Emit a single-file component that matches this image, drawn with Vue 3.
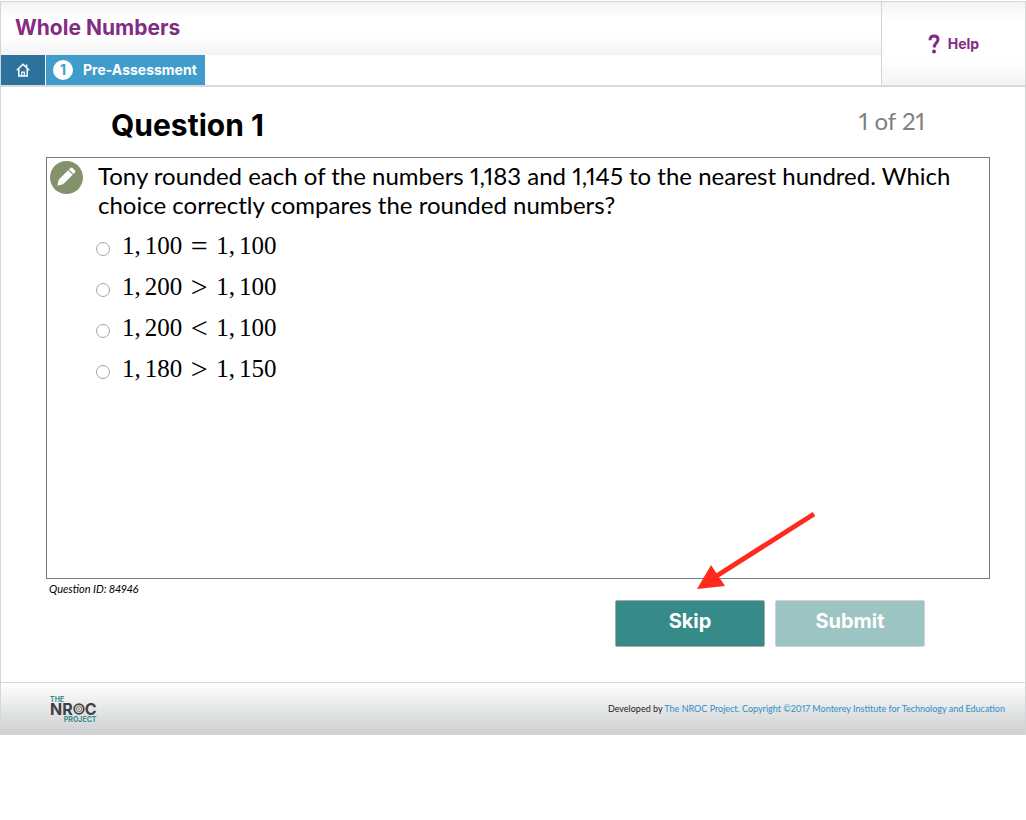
<script setup>
import { ref } from 'vue'

const selected = ref(null)
const choices = [
  { left: ['1', '100'], op: '=', right: ['1', '100'] },
  { left: ['1', '200'], op: '>', right: ['1', '100'] },
  { left: ['1', '200'], op: '<', right: ['1', '100'] },
  { left: ['1', '180'], op: '>', right: ['1', '150'] },
]
</script>

<template>
  <div class="page">
    <header class="header">
      <div class="header-main">
        <div class="title-bar">
          <h1 class="title">Whole Numbers</h1>
        </div>
        <nav class="crumbs">
          <a class="crumb home" href="#" aria-label="Home">
            <svg width="14" height="14" viewBox="0 0 14 14" fill="none" stroke="#fff" stroke-width="1.5">
              <path d="M0.8 7.3 7 1.2l6.2 6.1" />
              <path d="M2.8 6v7h8.4V6" />
              <path d="M5.7 13V9.2h2.6V13" stroke-width="1.2" />
              <path d="M10.6 1.5v3" />
            </svg>
          </a>
          <a class="crumb step" href="#">
            <span class="step-number">1</span>
            <span>Pre-Assessment</span>
          </a>
        </nav>
      </div>
      <a class="help" href="#">
        <svg width="12" height="20" viewBox="0 0 12 20" fill="none">
          <path d="M2 6.200C2 3.600 3.500 2 6 2C8.500 2 10 3.500 10 5.500C10 8.800 6.200 9 6.200 13.600" stroke="#832c82" stroke-width="3" />
          <circle cx="6" cy="17.600" r="2" fill="#832c82" />
        </svg>
        <span>Help</span>
      </a>
    </header>

    <main class="content">
      <div class="heading">
        <h2 class="question-title">Question 1</h2>
        <span class="progress">1 of 21</span>
      </div>

      <section class="question">
        <svg class="pencil" width="33" height="33" viewBox="0 0 33 33">
          <circle cx="16.500" cy="16.500" r="16.500" fill="#83926d" />
          <g transform="translate(7 25) rotate(-45)" fill="#fff">
            <path d="M0.500 0 5.500-3.200V3.200Z" />
            <path d="M5.500-3.200H19V3.200H5.500Z" />
            <path d="M20.200-3.200h2a1.500 1.500 0 0 1 1.500 1.500v3.400a1.500 1.500 0 0 1-1.500 1.500h-2Z" />
          </g>
        </svg>
        <fieldset class="body">
          <legend class="prompt">Tony rounded each of the numbers 1,183 and 1,145 to the nearest hundred. Which choice correctly compares the rounded numbers?</legend>
          <label v-for="(c, i) in choices" :key="i" class="choice">
            <input v-model="selected" type="radio" name="answer" :value="i" />
            <span class="math">
              <span class="number"><span>{{ c.left[0] }},</span><span>{{ c.left[1] }}</span></span>
              <span class="operator">{{ c.op }}</span>
              <span class="number"><span>{{ c.right[0] }},</span><span>{{ c.right[1] }}</span></span>
            </span>
          </label>
        </fieldset>
      </section>

      <p class="question-id">Question ID: 84946</p>

      <div class="actions">
        <div class="skip-wrap">
          <button class="action" type="button">Skip</button>
          <svg class="arrow" width="120" height="78" viewBox="0 0 120 78" aria-hidden="true">
            <path d="M117 3 18 66" stroke="#ff2a1c" stroke-width="5" />
            <path d="M0 78 14 54 28 75Z" fill="#ff2a1c" />
          </svg>
        </div>
        <button class="action" type="button" disabled>Submit</button>
      </div>
    </main>

    <footer class="footer">
      <a class="logo" href="#" aria-label="The NROC Project">
        <span class="logo-small">THE</span>
        <span class="logo-big">NR<svg width="12" height="12" viewBox="0 0 12 12" fill="none"><circle cx="6" cy="6" r="4.800" stroke="#414042" stroke-width="1.800" /><circle cx="6" cy="6" r="2.600" stroke="#83926d" stroke-width="1.200" /><circle cx="6" cy="6" r="0.900" fill="#83926d" /></svg>C</span>
        <span class="logo-small end">PROJECT</span>
      </a>
      <p class="credits">Developed by <a href="#">The NROC Project. Copyright ©2017 Monterey Institute for Technology and Education</a></p>
    </footer>
  </div>
</template>

<style>
body {
  background: #fff;
}
</style>

<style scoped>
.page {
  margin-top: 1px;
  border: 1px solid #d4d5d6;
  border-bottom: 0;
  font-family: "Lato", "Liberation Sans", sans-serif;
  font-variant-numeric: proportional-nums;
  color: #000;
}

a {
  text-decoration: none;
}

.header {
  display: flex;
  border-bottom: 2px solid #d9d9d9;
}

.header-main {
  flex: 1;
}

.title-bar {
  display: flex;
  align-items: center;
  box-sizing: border-box;
  height: 53px;
  padding: 0 14px 2px;
  background: linear-gradient(#f3f3f3, #fff 30%, #fff 65%, #f3f3f3);
}

.title {
  margin: 0;
  font-family: "Inter", sans-serif;
  font-size: 21px;
  line-height: 28px;
  color: #832c82;
}

.crumbs {
  display: flex;
  gap: 1px;
}

.crumb {
  display: flex;
  align-items: center;
  height: 30px;
  color: #fff;
}

.home {
  justify-content: center;
  width: 44px;
  background: #2c729d;
}

.step {
  gap: 10px;
  padding: 0 8px 0 7px;
  background: #409dcb;
  font-family: "Inter", sans-serif;
  font-size: 14px;
  line-height: 20px;
  font-weight: 700;
}

.step-number {
  width: 20px;
  border-radius: 50%;
  background: #fff;
  color: #409dcb;
  text-align: center;
}

.help {
  display: flex;
  align-items: center;
  justify-content: center;
  gap: 8px;
  box-sizing: border-box;
  width: 144px;
  border-left: 1px solid #d4d5d6;
  background: linear-gradient(#f3f3f3, #fff 22%, #fff 70%, #f3f3f3);
  font-family: "Inter", sans-serif;
  font-size: 14px;
  line-height: 20px;
  font-weight: 700;
  color: #832c82;
}

.content {
  padding: 0 35px 35px 45px;
}

.heading {
  display: flex;
  justify-content: space-between;
  align-items: flex-start;
  padding: 20px 65px 14px;
}

.question-title {
  margin: 0;
  font-family: "Inter", sans-serif;
  font-size: 30px;
  line-height: 36px;
}

.progress {
  font-size: 24px;
  line-height: 28px;
  color: #808080;
}

.question {
  display: flex;
  align-items: flex-start;
  gap: 15px;
  box-sizing: border-box;
  min-height: 422px;
  padding: 3px;
  border: 1px solid #7c7c7c;
}

.pencil {
  flex: none;
}

.body {
  flex: 1;
  min-width: 0;
  margin: 0;
  padding: 0;
  border: 0;
}

.prompt {
  padding: 0 0 6px;
  font-size: 24px;
  line-height: 29px;
}

.choice {
  display: flex;
  align-items: center;
  gap: 12px;
  height: 41px;
}

.choice input {
  appearance: none;
  box-sizing: border-box;
  width: 14px;
  height: 14px;
  margin: 6px 0 0 -2px;
  border: 1px solid #a6a6a6;
  border-radius: 50%;
  background: #fff;
}

.choice input:checked {
  border: 4px solid #368a88;
}

.math {
  display: flex;
  align-items: center;
  gap: 8px;
  font-family: "Liberation Serif", serif;
  font-size: 25px;
  line-height: 30px;
}

.number {
  display: flex;
  gap: 4px;
}

.operator {
  width: 18px;
  font-size: 30px;
  text-align: center;
}

.question-id {
  margin: 2px 3px 0;
  font-size: 11px;
  line-height: 16px;
  font-style: italic;
}

.actions {
  display: flex;
  justify-content: flex-end;
  gap: 10px;
  margin-top: 3px;
  padding-right: 65px;
}

.skip-wrap {
  position: relative;
}

.action {
  display: block;
  width: 150px;
  height: 47px;
  padding: 0 0 6px;
  border: 1px solid #a9a9a9;
  border-radius: 2px;
  background: #368a88;
  font-family: "Inter", sans-serif;
  font-size: 20px;
  line-height: 24px;
  font-weight: 700;
  color: #fff;
}

.action:disabled {
  border-color: #d2d2d2;
  background: #9bc4c3;
}

.arrow {
  position: absolute;
  left: 82px;
  bottom: 58px;
}

.footer {
  display: flex;
  align-items: center;
  justify-content: space-between;
  box-sizing: border-box;
  height: 53px;
  padding: 0 20px 0 49px;
  border-top: 1px solid #d4d5d6;
  background: linear-gradient(#fff, #d1d3d4 90%);
}

.logo {
  display: flex;
  flex-direction: column;
  font-family: "Inter", sans-serif;
  font-weight: 700;
}

.logo-small {
  font-size: 7px;
  line-height: 7px;
  color: #368a88;
}

.end {
  align-self: flex-end;
}

.logo-big {
  display: flex;
  align-items: center;
  font-size: 16px;
  line-height: 13px;
  color: #414042;
}

.credits {
  margin: 0;
  font-size: 9px;
  line-height: 12px;
  color: #222;
}

.credits a {
  color: #2e8fc5;
}
</style>
